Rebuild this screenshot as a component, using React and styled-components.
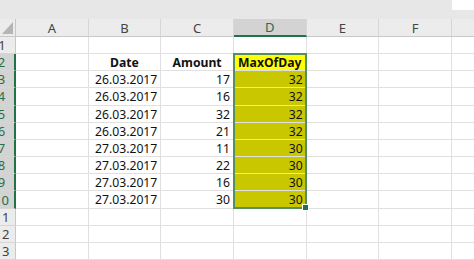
import React from 'react';
import styled, { createGlobalStyle, css } from 'styled-components';

const COL_W = 72.67;
const ROW_H = 17.2;
const HEAD_H = 17.8;
const ROWHEAD_W = 27;

const cols = ['A', 'B', 'C', 'D', 'E', 'F', 'G'];

const data = [
  ['26.03.2017', 17, 32],
  ['26.03.2017', 16, 32],
  ['26.03.2017', 32, 32],
  ['26.03.2017', 21, 32],
  ['27.03.2017', 11, 30],
  ['27.03.2017', 22, 30],
  ['27.03.2017', 16, 30],
  ['27.03.2017', 30, 30],
];

const GlobalStyle = createGlobalStyle`
  body {
    margin: 0;
    background: #fff;
    overflow: hidden;
  }
`;

const Page = styled.div`
  width: 474px;
  height: 260px;
  overflow: hidden;
  font-family: 'Noto Sans', 'Liberation Sans', sans-serif;
`;

const TopBand = styled.div`
  height: 19px;
  background: #e7e7e7;
  display: flex;
  justify-content: flex-end;
  align-items: flex-start;
`;

const WhiteTab = styled.div`
  width: 22px;
  height: 10px;
  background: #fff;
`;

const Sheet = styled.div`
  position: relative;
  margin-left: -11px;
  display: grid;
  grid-template-columns: ${ROWHEAD_W}px repeat(7, ${COL_W}px);
  grid-template-rows: ${HEAD_H}px;
  grid-auto-rows: ${ROW_H}px;
`;

const headBase = css`
  box-sizing: border-box;
  background: #ececec;
  color: #444;
  font-size: 13px;
  display: flex;
  align-items: center;
  justify-content: center;
`;

const Corner = styled.div`
  ${headBase};
  position: relative;
  border-right: 1px solid #c8c8c8;
  border-bottom: 1px solid #c8c8c8;
  &::after {
    content: '';
    position: absolute;
    right: 2px;
    bottom: 2px;
    border-style: solid;
    border-width: 0 0 12px 11px;
    border-color: transparent transparent #b5b5b5 transparent;
  }
`;

const ColHead = styled.div`
  ${headBase};
  padding-top: 1px;
  border-right: 1px solid #d6d6d6;
  border-bottom: 1px solid #c8c8c8;
  ${(p) =>
    p.$active &&
    css`
      background: #d3d3d3;
      color: #2a6e45;
      border-bottom: 2px solid #217346;
    `}
`;

const RowHead = styled.div`
  ${headBase};
  border-bottom: 1px solid #d6d6d6;
  border-right: 1px solid #c8c8c8;
  ${(p) =>
    p.$active &&
    css`
      background: #d3d3d3;
      color: #2a6e45;
      border-right: 2px solid #217346;
    `}
`;

const Cell = styled.div`
  box-sizing: border-box;
  border-right: 1px solid #e0e0e0;
  border-bottom: 1px solid #e0e0e0;
  background: ${(p) => p.$bg || '#fff'};
  color: #111;
  font-size: 12.2px;
  font-weight: ${(p) => (p.$bold ? 700 : 400)};
  text-align: ${(p) => p.$align || 'right'};
  padding: 0 3px;
  line-height: ${ROW_H}px;
  white-space: nowrap;
  overflow: hidden;
`;

const Selection = styled.div`
  position: absolute;
  box-sizing: border-box;
  left: ${ROWHEAD_W + COL_W * 3 - 1.5}px;
  top: ${HEAD_H + ROW_H - 1}px;
  width: ${COL_W + 2}px;
  height: ${ROW_H * 9 + 1.5}px;
  border: 2px solid #558f60;
  pointer-events: none;
  &::after {
    content: '';
    position: absolute;
    right: -4px;
    bottom: -4px;
    width: 5px;
    height: 5px;
    background: #217346;
    border: 1px solid #fff;
  }
`;

const rowCells = (r) => {
  if (r === 2) {
    return [
      <Cell key="a" />,
      <Cell key="b" $bold $align="center">Date</Cell>,
      <Cell key="c" $bold $align="center">Amount</Cell>,
      <Cell key="d" $bold $align="center" $bg="#ffff00">MaxOfDay</Cell>,
      <Cell key="e" />,
      <Cell key="f" />,
      <Cell key="g" />,
    ];
  }
  const item = data[r - 3];
  if (item) {
    return [
      <Cell key="a" />,
      <Cell key="b">{item[0]}</Cell>,
      <Cell key="c">{item[1]}</Cell>,
      <Cell key="d" $bg="#c9c700">{item[2]}</Cell>,
      <Cell key="e" />,
      <Cell key="f" />,
      <Cell key="g" />,
    ];
  }
  return cols.map((c) => <Cell key={c} />);
};

const App = () => {
  const rows = Array.from({ length: 13 }, (_, i) => i + 1);
  return (
    <Page>
      <GlobalStyle />
      <TopBand>
        <WhiteTab />
      </TopBand>
      <Sheet>
        <Corner />
        {cols.map((c) => (
          <ColHead key={c} $active={c === 'D'}>
            {c}
          </ColHead>
        ))}
        {rows.map((r) => (
          <React.Fragment key={r}>
            <RowHead $active={r >= 2 && r <= 10}>{r}</RowHead>
            {rowCells(r)}
          </React.Fragment>
        ))}
        <Selection />
      </Sheet>
    </Page>
  );
};

export default App;
